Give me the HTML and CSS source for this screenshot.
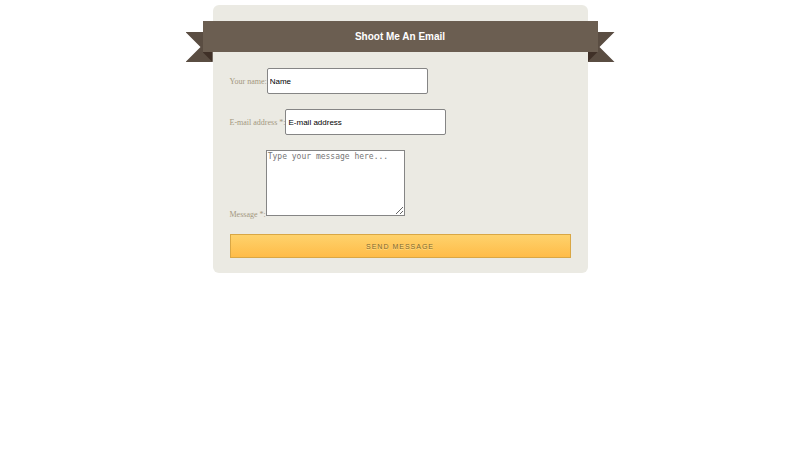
FILE: index.html
```html
<!DOCTYPE html>
<html lang="en">
<head>
    <meta charset="UTF-8">
    <meta name="viewport" content="width=device-width, initial-scale=1.0">
    <title>Shoot Me An Email</title>
    <link rel="stylesheet" href="styles.css">
</head>
<body>
    <div class="contact">
        <h1 class="ribbon"><span class="ribbon-content">Shoot Me An Email</span></h1>
        <form class="contact-form" action="#" method="post">
            <div class="field">
                <label for="name">Your name:</label>
                <input type="text" id="name" name="name" value="Name">
            </div>
            <div class="field">
                <label for="email">E-mail address *:</label>
                <input type="text" id="email" name="email" value="E-mail address">
            </div>
            <div class="field field-message">
                <label for="message">Message *:</label>
                <textarea id="message" name="message" placeholder="Type your message here..."></textarea>
            </div>
            <button class="send-button" type="submit">SEND MESSAGE</button>
        </form>
    </div>
</body>
</html>
```
FILE: styles.css
```css
body {
    margin: 5px 30px;
    background-color: #fff;
    font-family: "Liberation Serif", serif;
    font-size: 8px;
}

.contact {
    position: relative;
    z-index: 0;
    box-sizing: border-box;
    max-width: 375px;
    margin: 0 auto;
    padding: 16px 17px 15px;
    border-radius: 6px;
    background-color: #ebeae3;
}

.ribbon {
    position: relative;
    margin: 0 -27px 16px;
    background-color: #6b5e51;
    color: #fff;
    font-family: "Liberation Sans", sans-serif;
    font-size: 10px;
    line-height: 31px;
    text-align: center;
}

/* forked tails behind the ribbon */
.ribbon::before,
.ribbon::after {
    content: "";
    position: absolute;
    z-index: -1;
    top: 11px;
    width: 27px;
    height: 30px;
    background-color: #5a4d42;
}

.ribbon::before {
    left: -17px;
    clip-path: polygon(0 0, 100% 0, 100% 100%, 0 100%, 15px 50%);
}

.ribbon::after {
    right: -17px;
    clip-path: polygon(0 0, 100% 0, 12px 50%, 100% 100%, 0 100%);
}

/* dark folds under the ribbon ends */
.ribbon-content::before,
.ribbon-content::after {
    content: "";
    position: absolute;
    top: 100%;
    width: 10px;
    height: 10px;
    background-color: #3f3027;
}

.ribbon-content::before {
    left: 0;
    clip-path: polygon(0 0, 100% 0, 100% 100%);
}

.ribbon-content::after {
    right: 0;
    clip-path: polygon(0 0, 100% 0, 0 100%);
}

.field {
    display: flex;
    align-items: center;
    margin-bottom: 15px;
    color: #a3987f;
}

.field-message {
    align-items: flex-end;
}

.field input {
    box-sizing: border-box;
    width: 161px;
    height: 26px;
    padding: 1px 2px;
    border: 1px solid #858585;
    border-radius: 2px;
    background-color: #fff;
    color: #000;
    font-family: "Liberation Sans", sans-serif;
    font-size: 8px;
}

.field textarea {
    box-sizing: border-box;
    width: 139px;
    height: 66px;
    margin-bottom: 3px;
    padding: 1px;
    border: 1px solid #858585;
    background-color: #fff;
    font-family: "DejaVu Sans Mono", monospace;
    font-size: 8px;
}

.field textarea::placeholder {
    color: #757575;
}

.send-button {
    display: block;
    width: 100%;
    height: 24px;
    padding: 0;
    border: 1px solid #d9a745;
    background-image: linear-gradient(#fed26c, #ffbc48);
    color: #7e6a35;
    font-family: "Liberation Sans", sans-serif;
    font-size: 7px;
    letter-spacing: 1px;
    text-shadow: 0 1px 0 #ffdd87;
    cursor: pointer;
}

.send-button:hover {
    background-image: linear-gradient(#ffbc48, #fed26c);
}
```
